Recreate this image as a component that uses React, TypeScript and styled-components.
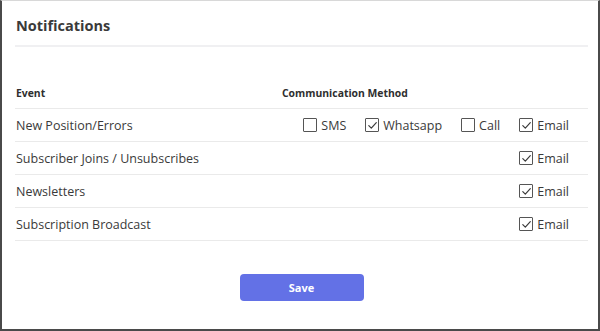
import React, { FC, useState } from 'react'
import styled, { createGlobalStyle } from 'styled-components'

type Method = 'sms' | 'whatsapp' | 'call' | 'email'

type EventRow = {
  id: string
  label: string
  methods: Method[]
}

const methodLabels: Record<Method, string> = {
  sms: 'SMS',
  whatsapp: 'Whatsapp',
  call: 'Call',
  email: 'Email',
}

const events: EventRow[] = [
  { id: 'position', label: 'New Position/Errors', methods: ['sms', 'whatsapp', 'call', 'email'] },
  { id: 'subscriber', label: 'Subscriber Joins / Unsubscribes', methods: ['email'] },
  { id: 'newsletters', label: 'Newsletters', methods: ['email'] },
  { id: 'broadcast', label: 'Subscription Broadcast', methods: ['email'] },
]

const initialChecked: Record<string, boolean> = {
  'position-whatsapp': true,
  'position-email': true,
  'subscriber-email': true,
  'newsletters-email': true,
  'broadcast-email': true,
}

const GlobalStyle = createGlobalStyle`
  html, body {
    margin: 0;
    padding: 0;
    background: #fff;
  }
  body {
    font-family: 'Open Sans', 'Noto Sans', sans-serif;
    color: #3a3a3a;
  }
`

const CheckIcon: FC = () => (
  <svg width="11" height="11" viewBox="0 0 11 11" fill="none">
    <path d="M1.8 5.6 L4.3 8.1 L9.3 2.6" stroke="#3a3a3a" strokeWidth="1.2" strokeLinecap="round" strokeLinejoin="round" />
  </svg>
)

type OptionProps = {
  label: string
  checked: boolean
  onToggle: () => void
}

const Option: FC<OptionProps> = ({ label, checked, onToggle }) => (
  <OptionEl onClick={onToggle}>
    <Box>{checked && <CheckIcon />}</Box>
    <span>{label}</span>
  </OptionEl>
)

const App: FC = () => {
  const [checked, setChecked] = useState(initialChecked)

  const toggle = (key: string) => setChecked((prev) => ({ ...prev, [key]: !prev[key] }))

  return (
    <>
      <GlobalStyle />
      <Frame>
        <Header>
          <Title>Notifications</Title>
        </Header>
        <Table>
          <HeadRow>
            <HeadCell>Event</HeadCell>
            <HeadCell>Communication Method</HeadCell>
          </HeadRow>
          {events.map((ev) => (
            <Row key={ev.id}>
              <EventName>{ev.label}</EventName>
              <Options>
                {ev.methods.map((m) => {
                  const key = `${ev.id}-${m}`
                  return <Option key={key} label={methodLabels[m]} checked={!!checked[key]} onToggle={() => toggle(key)} />
                })}
              </Options>
            </Row>
          ))}
        </Table>
        <Footer>
          <SaveButton type="button">Save</SaveButton>
        </Footer>
      </Frame>
    </>
  )
}

export default App

const Frame = styled.div`
  box-sizing: border-box;
  width: 600px;
  height: 331px;
  border: 2px solid #4a4a4a;
  border-top: 1px solid #d8d8d8;
  padding: 0 10px 0 13px;
  background: #fff;
`

const Header = styled.div`
  box-sizing: border-box;
  height: 46px;
  display: flex;
  align-items: center;
  padding: 4px 0 0 1px;
  border-bottom: 2px solid #f0f0f2;
`

const Title = styled.h1`
  margin: 0;
  font-size: 14.5px;
  font-weight: 700;
  color: #3a3a3a;
`

const Table = styled.div`
  margin-top: 30px;
  display: flex;
  flex-direction: column;
`

const HeadRow = styled.div`
  display: grid;
  grid-template-columns: 266px 1fr;
  height: 31px;
  align-items: center;
  border-bottom: 1px solid #eaeaea;
  padding-left: 1px;
`

const HeadCell = styled.div`
  font-size: 10.4px;
  font-weight: 700;
  color: #2e2e2e;
`

const Row = styled.div`
  display: grid;
  grid-template-columns: 266px 1fr;
  height: 32px;
  align-items: center;
  border-bottom: 1px solid #eaeaea;
  padding-left: 1px;
`

const EventName = styled.div`
  font-size: 12.5px;
  color: #3a3a3a;
`

const Options = styled.div`
  display: flex;
  justify-content: flex-end;
  align-items: center;
  gap: 19px;
  padding-right: 19px;
`

const OptionEl = styled.label`
  display: flex;
  align-items: center;
  gap: 4px;
  font-size: 12.5px;
  color: #3a3a3a;
  cursor: pointer;
`

const Box = styled.span`
  box-sizing: border-box;
  width: 14px;
  height: 14px;
  border: 1px solid #555;
  border-radius: 1px;
  display: flex;
  align-items: center;
  justify-content: center;
`

const Footer = styled.div`
  display: flex;
  justify-content: center;
  padding-top: 33px;
`

const SaveButton = styled.button`
  width: 124px;
  height: 27px;
  border: none;
  border-radius: 4px;
  background: #6371e6;
  color: #fff;
  font-family: 'Open Sans', 'Noto Sans', sans-serif;
  font-size: 11px;
  font-weight: 700;
  cursor: pointer;
`
